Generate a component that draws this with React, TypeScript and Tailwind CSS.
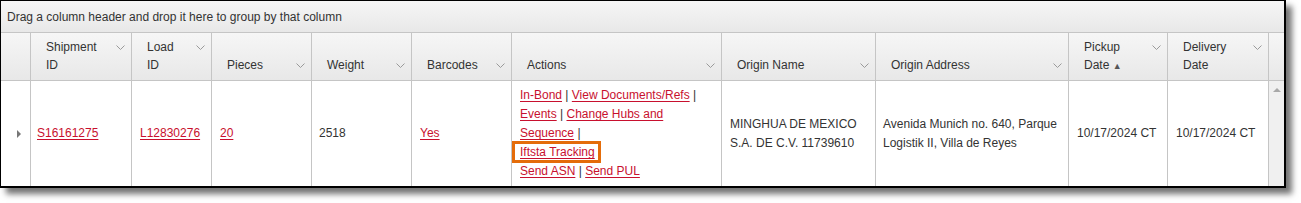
import React from 'react';

const link = 'text-[#c8102e] underline underline-offset-[2px]';

const Chevron: React.FC = () => (
    <svg width="9" height="5" viewBox="0 0 9 5" className="shrink-0">
        <path d="M0.5 0.5 L4.5 4.5 L8.5 0.5" fill="none" stroke="#9a9a9a" strokeWidth="1" />
    </svg>
);

interface HeaderCellProps {
    width: string;
    lines: React.ReactNode[];
}

const HeaderCell: React.FC<HeaderCellProps> = ({ width, lines }) => (
    <div className={`${width} shrink-0 border-r border-[#c5c5c5] flex flex-col justify-end pl-[15px] pr-[6px] pb-[6px]`}>
        {lines.map((line, i) => (
            <div key={i} className="h-[18px] flex items-center justify-between">
                <span>{line}</span>
                {i === 0 && <Chevron />}
            </div>
        ))}
    </div>
);

const Pipe: React.FC = () => <span className="text-[#333]"> | </span>;

const App: React.FC = () => {
    return (
        <div className="bg-white w-[1301px] h-[203px]" style={{ fontFamily: '"Liberation Sans", Arial, sans-serif' }}>
            <div className="w-[1286px] h-[188px] border-l border-t border-r-2 border-b-2 border-black shadow-[6px_6px_6px_rgba(0,0,0,0.55)] text-[12px] text-[#333] flex flex-col">
                {/* group panel */}
                <div className="h-[32px] shrink-0 border-b border-[#c5c5c5] bg-linear-to-b from-[#f6f6f6] to-[#e8e8e8] flex items-center pl-[6px]">
                    Drag a column header and drop it here to group by that column
                </div>

                {/* header */}
                <div className="h-[48px] shrink-0 border-b border-[#c5c5c5] bg-linear-to-b from-[#f6f6f6] to-[#e8e8e8] flex">
                    <div className="w-[30px] shrink-0 border-r border-[#c5c5c5]" />
                    <HeaderCell width="w-[101px]" lines={['Shipment', 'ID']} />
                    <HeaderCell width="w-[80px]" lines={['Load', 'ID']} />
                    <HeaderCell width="w-[100px]" lines={['Pieces']} />
                    <HeaderCell width="w-[100px]" lines={['Weight']} />
                    <HeaderCell width="w-[100px]" lines={['Barcodes']} />
                    <HeaderCell width="w-[210px]" lines={['Actions']} />
                    <HeaderCell width="w-[154px]" lines={['Origin Name']} />
                    <HeaderCell width="w-[193px]" lines={['Origin Address']} />
                    <HeaderCell
                        width="w-[99px]"
                        lines={[
                            'Pickup',
                            <>
                                Date <span className="text-[9px] text-[#555]">▲</span>
                            </>,
                        ]}
                    />
                    <HeaderCell width="w-[101px]" lines={['Delivery', 'Date']} />
                    <div className="flex-1" />
                </div>

                {/* body */}
                <div className="flex-1 flex leading-[19px]">
                    <div className="w-[30px] shrink-0 border-r border-[#c5c5c5] flex items-center pl-[16px]">
                        <span className="w-0 h-0 border-y-[4px] border-y-transparent border-l-[4px] border-l-[#777]" />
                    </div>
                    <div className="w-[101px] shrink-0 border-r border-[#c5c5c5] flex items-center pl-[6px]">
                        <a className={link}>S16161275</a>
                    </div>
                    <div className="w-[80px] shrink-0 border-r border-[#c5c5c5] flex items-center pl-[8px]">
                        <a className={link}>L12830276</a>
                    </div>
                    <div className="w-[100px] shrink-0 border-r border-[#c5c5c5] flex items-center pl-[8px]">
                        <a className={link}>20</a>
                    </div>
                    <div className="w-[100px] shrink-0 border-r border-[#c5c5c5] flex items-center pl-[7px]">
                        2518
                    </div>
                    <div className="w-[100px] shrink-0 border-r border-[#c5c5c5] flex items-center pl-[8px]">
                        <a className={link}>Yes</a>
                    </div>
                    <div className="w-[210px] shrink-0 border-r border-[#c5c5c5] flex items-center pl-[8px]">
                        <div>
                            <a className={link}>In-Bond</a>
                            <Pipe />
                            <a className={link}>View Documents/Refs</a>
                            <Pipe />
                            <br />
                            <a className={link}>Events</a>
                            <Pipe />
                            <a className={link}>
                                Change Hubs and
                                <br />
                                Sequence
                            </a>
                            <Pipe />
                            <br />
                            <span className="relative">
                                <a className={link}>Iftsta Tracking</a>
                                <span className="absolute left-[-8px] right-[-6px] top-[-4px] bottom-[-4px] border-[3px] border-[#e46c0a]" />
                            </span>
                            <br />
                            <a className={link}>Send ASN</a>
                            <Pipe />
                            <a className={link}>Send PUL</a>
                        </div>
                    </div>
                    <div className="w-[154px] shrink-0 border-r border-[#c5c5c5] flex items-center pl-[8px]">
                        <div>
                            MINGHUA DE MEXICO
                            <br />
                            S.A. DE C.V. 11739610
                        </div>
                    </div>
                    <div className="w-[193px] shrink-0 border-r border-[#c5c5c5] flex items-center pl-[7px]">
                        <div>
                            Avenida Munich no. 640, Parque
                            <br />
                            Logistik II, Villa de Reyes
                        </div>
                    </div>
                    <div className="w-[99px] shrink-0 border-r border-[#c5c5c5] flex items-center pl-[8px]">
                        10/17/2024 CT
                    </div>
                    <div className="w-[101px] shrink-0 border-r border-[#c5c5c5] flex items-center pl-[8px]">
                        10/17/2024 CT
                    </div>
                    <div className="flex-1 bg-[#f0f0f0] flex justify-center pt-[7px]">
                        <span className="w-0 h-0 border-x-[4px] border-x-transparent border-b-[4px] border-b-[#a8a8a8]" />
                    </div>
                </div>
            </div>
        </div>
    );
};

export default App;
